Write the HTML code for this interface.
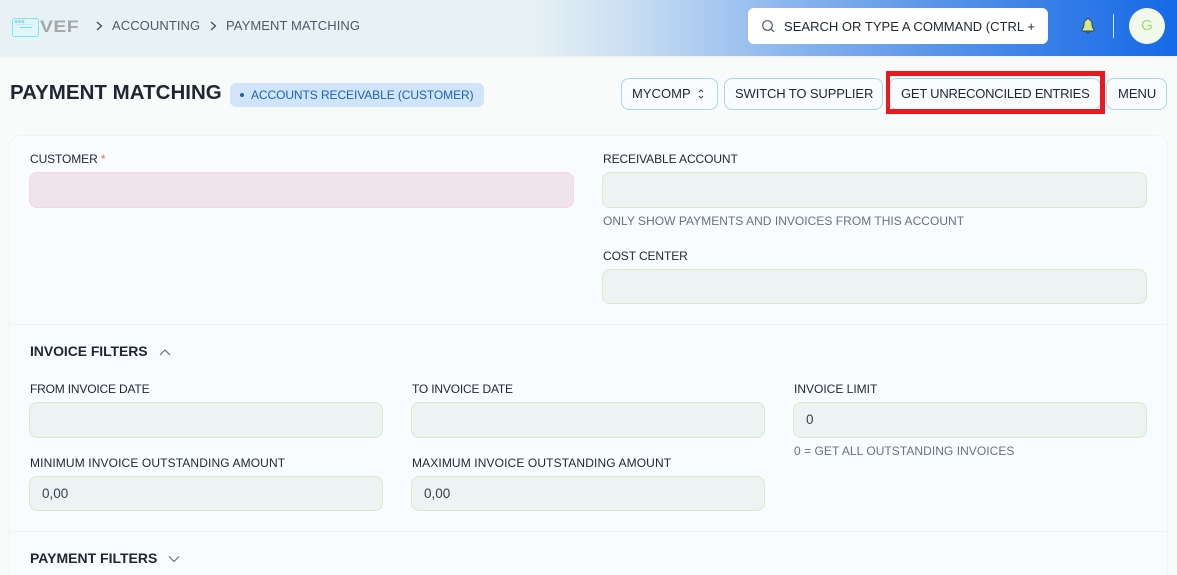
<!DOCTYPE html>
<html><head><meta charset="utf-8"><title>Payment Matching</title>
<style>
*{box-sizing:border-box}
html,body{margin:0;padding:0;width:1177px;height:575px;overflow:hidden;background:#f9fbfb;font-family:"Liberation Sans",sans-serif;color:#1f272e}
#w{position:relative;width:1177px;height:575px;overflow:hidden}
.t{position:absolute;white-space:nowrap;line-height:16px}
.nav{position:absolute;left:0;top:0;width:1177px;height:56px;background:linear-gradient(90deg,#e8f2f4 0,#e8f2f4 45%,#c9def2 53.500%,#8fb8ee 66%,#4f8eea 82%,#1469e6 100%);box-shadow:0 1px 2px rgba(0,0,0,.05)}
.btn{position:absolute;top:78px;height:32px;background:#f8fcff;border:1px solid #a9d6e8;border-radius:8px}
.bt{top:86px;font-size:13px}
.card{position:absolute;left:10px;top:136px;width:1157px;height:439px;background:#f8fcff;border-radius:10px 10px 0 0;box-shadow:0 0 2px rgba(0,0,0,.08)}
.in{position:absolute;background:#ebf3f3;border:1px solid #dce8c8;border-radius:8px}
.hr{position:absolute;left:10px;width:1157px;height:1px;background:#f0f3f5}
.l{font-size:12px;color:#1f272e}
.h{font-size:12px;color:#68727c}
.v{font-size:13.500px;color:#38424a}
</style></head><body><div id="w">
<div class="nav"></div>
<svg style="position:absolute;left:12px;top:17px" width="28" height="21" viewBox="0 0 28 21" fill="none">
<rect x=".5" y="1.500" width="26" height="18" rx="2" fill="#e0f6f8" stroke="#7fe6ec"/>
<circle cx="4" cy="4.500" r="1" stroke="#5fc6d0" stroke-width=".7"/><circle cx="7.500" cy="4.500" r="1" stroke="#5fc6d0" stroke-width=".7"/><circle cx="11" cy="4.500" r="1" stroke="#5fc6d0" stroke-width=".7"/>
<path d="M3 7.500H22" stroke="#c4eef2"/><path d="M8 10.500H20" stroke="#6fdfe6"/>
</svg>
<div class="t" style="left:40px;top:19px;font-size:17px;font-weight:bold;color:#a3a8aa;letter-spacing:.4px;transform:scaleX(1.140);transform-origin:left">VEF</div>
<svg style="position:absolute;left:94px;top:20px" width="12" height="12" fill="none" stroke="#3c444c" stroke-width="1.200"><path d="M3 2l4.500 4L3 10"/></svg>
<div class="t" style="left:112px;top:18px;font-size:13px;color:#4c5a67;letter-spacing:.08px">ACCOUNTING</div>
<svg style="position:absolute;left:208px;top:20px" width="12" height="12" fill="none" stroke="#3c444c" stroke-width="1.200"><path d="M3 2l4.500 4L3 10"/></svg>
<div class="t" style="left:226px;top:18px;font-size:13px;color:#4c5a67;letter-spacing:.09px">PAYMENT MATCHING</div>

<div style="position:absolute;left:748px;top:8px;width:300px;height:36px;background:#fff;border-radius:6px"></div>
<svg style="position:absolute;left:760px;top:18px" width="16" height="16" fill="none" stroke="#4c5a67" stroke-width="1.200"><circle cx="7.500" cy="7.500" r="4.800"/><path d="M11 11l3 3"/></svg>
<div class="t" style="left:784px;top:19px;font-size:13px;color:#1f272e;letter-spacing:.02px">SEARCH OR TYPE A COMMAND (CTRL +</div>
<svg style="position:absolute;left:1080px;top:17px" width="16" height="18" viewBox="0 0 16 18"><path d="M8 1.500c-.9 0-1.200.6-1.300 1.200C4.700 3.400 4 5 4 7c0 3-1 4.500-2 5.700V14h12v-1.300C13 11.500 12 10 12 7c0-2-.7-3.600-2.700-4.300C9.200 2.100 8.900 1.500 8 1.500z" fill="#d2e98a" stroke="#3c444c" stroke-width="1"/><path d="M6.500 14.500c.2 1 .8 1.500 1.500 1.500s1.300-.5 1.500-1.500" fill="none" stroke="#3c444c"/></svg>
<div style="position:absolute;left:1113px;top:14px;width:1px;height:24px;background:#d7e6f8"></div>
<div style="position:absolute;left:1129px;top:8px;width:36px;height:36px;border-radius:50%;background:#f2f8ec"></div>
<div class="t" style="left:1129px;top:18px;width:36px;text-align:center;font-size:15px;color:#9ade6d">G</div>

<div class="t" style="left:10px;top:81px;line-height:24px;font-size:20.500px;font-weight:bold;color:#1f272e;letter-spacing:.02px">PAYMENT MATCHING</div>
<div style="position:absolute;left:230px;top:83px;width:254px;height:24px;background:#d0e5fb;border-radius:6px"></div>
<div style="position:absolute;left:240px;top:93px;width:4px;height:4px;border-radius:50%;background:#1f62ad"></div>
<div class="t" style="left:251px;top:87px;font-size:12px;color:#1f62ad;letter-spacing:-.08px">ACCOUNTS RECEIVABLE (CUSTOMER)</div>

<div class="btn" style="left:621px;width:97px"></div>
<div class="t bt" style="left:632px;letter-spacing:.03px">MYCOMP</div>
<svg style="position:absolute;left:695px;top:87px" width="12" height="14" fill="none" stroke="#3c444c" stroke-width="1"><path d="M4 5l2-2 2 2M4 9l2 2 2-2"/></svg>
<div class="btn" style="left:724px;width:159px"></div>
<div class="t bt" style="left:735px;letter-spacing:-.12px">SWITCH TO SUPPLIER</div>
<div class="btn" style="left:889px;width:212px"></div>
<div style="position:absolute;left:886px;top:71px;width:219px;height:43px;border:5px solid #e8191f;border-left-width:4px"></div>
<div class="t bt" style="left:901px;letter-spacing:-.23px">GET UNRECONCILED ENTRIES</div>
<div class="btn" style="left:1106px;width:61px"></div>
<div class="t bt" style="left:1118px">MENU</div>

<div class="card"></div>
<div class="t l" style="left:30px;top:151px;letter-spacing:-.1px">CUSTOMER <span style="color:#e86c6c">*</span></div>
<div class="in" style="left:29px;top:172px;width:545px;height:36px;background:#f1e3ea;border-color:#f5d6e4"></div>
<div class="t l" style="left:603px;top:151px;letter-spacing:-.1px">RECEIVABLE ACCOUNT</div>
<div class="in" style="left:602px;top:172px;width:545px;height:36px"></div>
<div class="t h" style="left:603px;top:213px;letter-spacing:.03px">ONLY SHOW PAYMENTS AND INVOICES FROM THIS ACCOUNT</div>
<div class="t l" style="left:603px;top:248px;letter-spacing:-.1px">COST CENTER</div>
<div class="in" style="left:602px;top:269px;width:545px;height:35px"></div>
<div class="hr" style="top:324px"></div>

<div class="t" style="left:30px;top:343px;font-size:14px;font-weight:bold;letter-spacing:-.08px">INVOICE FILTERS</div>
<svg style="position:absolute;left:158px;top:345px" width="14" height="14" fill="none" stroke="#5f6b75" stroke-width="1.100"><path d="M2 10l5-5 5 5"/></svg>

<div class="t l" style="left:30px;top:381px;letter-spacing:-.18px">FROM INVOICE DATE</div>
<div class="in" style="left:29px;top:402px;width:354px;height:36px"></div>
<div class="t l" style="left:412px;top:381px;letter-spacing:-.18px">TO INVOICE DATE</div>
<div class="in" style="left:411px;top:402px;width:354px;height:36px"></div>
<div class="t l" style="left:794px;top:381px">INVOICE LIMIT</div>
<div class="in" style="left:793px;top:402px;width:354px;height:36px"></div>
<div class="t v" style="left:806px;top:412px">0</div>
<div class="t h" style="left:794px;top:443px;letter-spacing:.05px">0 = GET ALL OUTSTANDING INVOICES</div>

<div class="t l" style="left:30px;top:455px;letter-spacing:.12px">MINIMUM INVOICE OUTSTANDING AMOUNT</div>
<div class="in" style="left:29px;top:476px;width:354px;height:35px"></div>
<div class="t v" style="left:42px;top:486px">0,00</div>
<div class="t l" style="left:412px;top:455px;letter-spacing:.12px">MAXIMUM INVOICE OUTSTANDING AMOUNT</div>
<div class="in" style="left:411px;top:476px;width:354px;height:35px"></div>
<div class="t v" style="left:424px;top:486px">0,00</div>
<div class="hr" style="top:531px"></div>

<div class="t" style="left:30px;top:550px;font-size:14px;font-weight:bold">PAYMENT FILTERS</div>
<svg style="position:absolute;left:167px;top:552px" width="14" height="14" fill="none" stroke="#5f6b75" stroke-width="1.100"><path d="M2 4.500l5 5 5-5"/></svg>
</div></body></html>
